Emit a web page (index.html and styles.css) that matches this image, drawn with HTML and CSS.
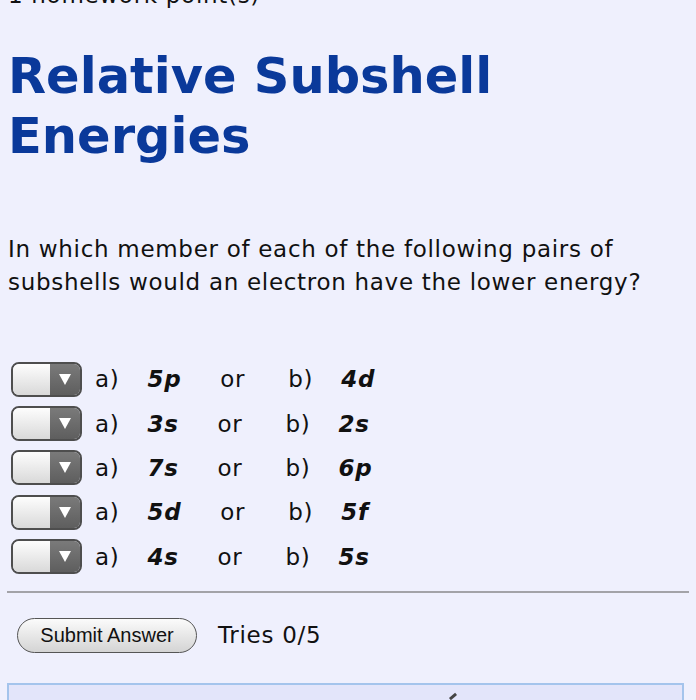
FILE: index.html
```html
<!DOCTYPE html>
<html lang="en">
<head>
    <meta charset="UTF-8">
    <meta name="viewport" content="width=device-width, initial-scale=1.0">
    <title>Relative Subshell Energies</title>
    <link rel="stylesheet" href="styles.css">
</head>
<body>
    <div class="points">1 homework point(s)</div>
    <h1 class="title">Relative Subshell Energies</h1>
    <p class="question">In which member of each of the following pairs of subshells would an electron have the lower energy?</p>

    <div class="pairs">
        <div class="pair">
            <div class="picker"><span class="picker-value"></span><span class="picker-arrow"></span></div>
            <span class="label">a)</span><span class="shell">5p</span><span class="or">or</span><span class="label">b)</span><span class="shell">4d</span>
        </div>
        <div class="pair">
            <div class="picker"><span class="picker-value"></span><span class="picker-arrow"></span></div>
            <span class="label">a)</span><span class="shell">3s</span><span class="or">or</span><span class="label">b)</span><span class="shell">2s</span>
        </div>
        <div class="pair">
            <div class="picker"><span class="picker-value"></span><span class="picker-arrow"></span></div>
            <span class="label">a)</span><span class="shell">7s</span><span class="or">or</span><span class="label">b)</span><span class="shell">6p</span>
        </div>
        <div class="pair">
            <div class="picker"><span class="picker-value"></span><span class="picker-arrow"></span></div>
            <span class="label">a)</span><span class="shell">5d</span><span class="or">or</span><span class="label">b)</span><span class="shell">5f</span>
        </div>
        <div class="pair">
            <div class="picker"><span class="picker-value"></span><span class="picker-arrow"></span></div>
            <span class="label">a)</span><span class="shell">4s</span><span class="or">or</span><span class="label">b)</span><span class="shell">5s</span>
        </div>
    </div>

    <hr class="divider">

    <div class="submit-row">
        <button class="submit">Submit Answer</button>
        <span class="tries">Tries 0/5</span>
    </div>

    <div class="feedback"><span class="feedback-mark"></span></div>
</body>
</html>
```

FILE: styles.css
```css
* {
    margin: 0;
    padding: 0;
    box-sizing: border-box;
}
html, body {
    background: #eff0fd;
    font-family: "DejaVu Sans", Verdana, sans-serif;
    color: #111;
    overflow: hidden;
}
body {
    padding: 0 8px;
    height: 700px;
}
.points {
    font-size: 23px;
    letter-spacing: 0.7px;
    line-height: 33px;
    margin-top: -21px;
}
.title {
    margin-top: 34px;
    font-size: 49.5px;
    line-height: 60px;
    font-weight: bold;
    color: #0a399a;
}
.question {
    margin-top: 67px;
    font-size: 23px;
    letter-spacing: 0.7px;
    line-height: 33px;
}
.pairs {
    margin-top: 58px;
}
.pair {
    display: flex;
    align-items: center;
    height: 44.4px;
    font-size: 23px;
    letter-spacing: 0.7px;
}
.picker {
    display: flex;
    width: 71px;
    height: 35px;
    margin-left: 3px;
    border: 2px solid #4e4e4e;
    border-radius: 8px;
    overflow: hidden;
}
.picker-value {
    width: 37px;
    background: linear-gradient(#fdfdfd, #d9d9d9);
}
.picker-arrow {
    flex: 1;
    display: flex;
    align-items: center;
    justify-content: center;
    background: linear-gradient(#7a7a7a, #5e5e5e);
}
.picker-arrow::before {
    content: '';
    border-left: 6px solid transparent;
    border-right: 6px solid transparent;
    border-top: 11px solid #fff;
}
.label {
    margin-left: 13px;
}
.shell {
    margin-left: 28px;
    font-weight: bold;
    font-style: italic;
}
.or {
    margin-left: 39px;
    margin-right: 30px;
}
.divider {
    margin: 12px -1px 0 -1px;
    border: none;
    border-top: 2px solid #a3a3a8;
}
.submit-row {
    display: flex;
    align-items: center;
    margin-top: 25px;
    padding-left: 9px;
}
.submit {
    width: 180px;
    height: 35px;
    border: 1.5px solid #555;
    border-radius: 18px;
    background: linear-gradient(#fbfbfb, #d4d4d4);
    font-family: "Liberation Sans", Arial, sans-serif;
    font-size: 20px;
    color: #111;
}
.tries {
    margin-left: 21px;
    font-size: 23px;
    letter-spacing: 0.7px;
}
.feedback {
    margin: 30px 4px 0 -1px;
    height: 60px;
    border: 2px solid #a4c4ec;
    background: #e3e5fa;
    position: relative;
}
.feedback-mark {
    position: absolute;
    left: 440px;
    top: 10px;
    width: 8px;
    height: 3px;
    background: #444;
    transform: rotate(-40deg);
}
```
